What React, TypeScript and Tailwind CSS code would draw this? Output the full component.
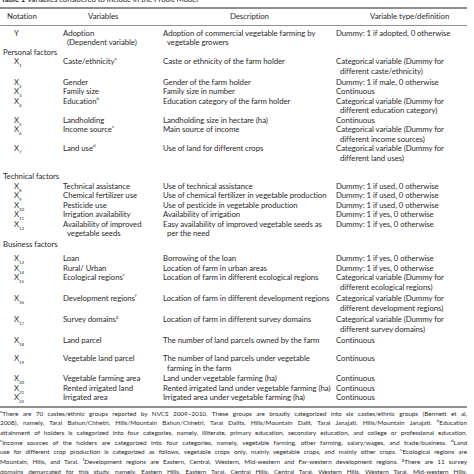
type Row = {
  n?: string;
  sub?: string;
  v?: string[];
  sup?: string;
  d?: string[];
  t?: string[];
  group?: string;
  mt: string;
};

const rows: Row[] = [
  { n: "Y", v: ["Adoption", "(Dependent variable)"], d: ["Adoption of commercial vegetable farming by", "vegetable growers"], t: ["Dummy: 1 if adopted, 0 otherwise"], mt: "mt-[3px]" },
  { group: "Personal factors", mt: "mt-[0px]" },
  { n: "X", sub: "1", v: ["Caste/ethnicity"], sup: "a", d: ["Caste or ethnicity of the farm holder"], t: ["Categorical variable (Dummy for", "different caste/ethnicity)"], mt: "mt-[0px]" },
  { n: "X", sub: "2", v: ["Gender"], d: ["Gender of the farm holder"], t: ["Dummy: 1 if male, 0 otherwise"], mt: "mt-[1.5px]" },
  { n: "X", sub: "3", v: ["Family size"], d: ["Family size in number"], t: ["Continuous"], mt: "mt-[0px]" },
  { n: "X", sub: "4", v: ["Education"], sup: "b", d: ["Education category of the farm holder"], t: ["Categorical variable (Dummy for", "different education category)"], mt: "mt-[0px]" },
  { n: "X", sub: "5", v: ["Landholding"], d: ["Landholding size in hectare (ha)"], t: ["Continuous"], mt: "mt-[0px]" },
  { n: "X", sub: "6", v: ["Income source"], sup: "c", d: ["Main source of income"], t: ["Categorical variable (Dummy for", "different income sources)"], mt: "mt-[0px]" },
  { n: "X", sub: "7", v: ["Land use"], sup: "d", d: ["Use of land for different crops"], t: ["Categorical variable (Dummy for", "different land uses)"], mt: "mt-[0px]" },
  { group: "Technical factors", mt: "mt-[9px]" },
  { n: "X", sub: "8", v: ["Technical assistance"], d: ["Use of technical assistance"], t: ["Dummy: 1 if used, 0 otherwise"], mt: "mt-[0px]" },
  { n: "X", sub: "9", v: ["Chemical fertilizer use"], d: ["Use of chemical fertilizer in vegetable production"], t: ["Dummy: 1 if used, 0 otherwise"], mt: "mt-[0px]" },
  { n: "X", sub: "10", v: ["Pesticide use"], d: ["Use of pesticide in vegetable production"], t: ["Dummy: 1 if used, 0 otherwise"], mt: "mt-[0px]" },
  { n: "X", sub: "11", v: ["Irrigation availability"], d: ["Availability of irrigation"], t: ["Dummy: 1 if yes, 0 otherwise"], mt: "mt-[0px]" },
  { n: "X", sub: "12", v: ["Availability of improved", "vegetable seeds"], d: ["Easy availability of improved vegetable seeds as", "per the need"], t: ["Dummy: 1 if yes, 0 otherwise"], mt: "mt-[0px]" },
  { group: "Business factors", mt: "mt-[1.5px]" },
  { n: "X", sub: "13", v: ["Loan"], d: ["Borrowing of the loan"], t: ["Dummy: 1 if yes, 0 otherwise"], mt: "mt-[4.5px]" },
  { n: "X", sub: "14", v: ["Rural/ Urban"], d: ["Location of farm in urban areas"], t: ["Dummy: 1 if yes, 0 otherwise"], mt: "mt-[0px]" },
  { n: "X", sub: "15", v: ["Ecological regions"], sup: "e", d: ["Location of farm in different ecological regions"], t: ["Categorical variable (Dummy for", "different ecological regions)"], mt: "mt-[0px]" },
  { n: "X", sub: "16", v: ["Development regions"], sup: "f", d: ["Location of farm in different development regions"], t: ["Categorical variable (Dummy for", "different development regions)"], mt: "mt-[2px]" },
  { n: "X", sub: "17", v: ["Survey domains"], sup: "g", d: ["Location of farm in different survey domains"], t: ["Categorical variable (Dummy for", "different survey domains)"], mt: "mt-[2px]" },
  { n: "X", sub: "18", v: ["Land parcel"], d: ["The number of land parcels owned by the farm"], t: ["Continuous"], mt: "mt-[2px]" },
  { n: "X", sub: "19", v: ["Vegetable land parcel"], d: ["The number of land parcels under vegetable", "farming in the farm"], t: ["Continuous"], mt: "mt-[8.5px]" },
  { n: "X", sub: "20", v: ["Vegetable farming area"], d: ["Land under vegetable farming (ha)"], t: ["Continuous"], mt: "mt-[1px]" },
  { n: "X", sub: "21", v: ["Rented irrigated land"], d: ["Rented irrigated land under vegetable farming (ha)"], t: ["Continuous"], mt: "mt-[0px]" },
  { n: "X", sub: "22", v: ["Irrigated area"], d: ["Irrigated area under vegetable farming (ha)"], t: ["Continuous"], mt: "mt-[0px]" },
];

function Sup({ c }: { c: string }) {
  return <span className="align-super text-[4.5px] leading-none">{c}</span>;
}

const notes = [
  <>
    <Sup c="a" />There are 70 castes/ethnic groups reported by NVCS 2009–2010. These groups are broadly categorized into six castes/ethnic groups (Bennett et al,
  </>,
  <>
    2008), namely, Tarai Bahun/Chhetri, Hills/Mountain Bahun/Chhetri, Tarai Dalits, Hills/Mountain Dalit, Tarai Janajati, Hills/Mountain Janajati. <Sup c="b" />Education
  </>,
  <>attainment of holders is categorized into four categories, namely, illiterate, primary education, secondary education, and college or professional education.</>,
  <>
    <Sup c="c" />Income sources of the holders are categorized into four categories, namely, vegetable farming, other farming, salary/wages, and trade/business. <Sup c="d" />Land
  </>,
  <>
    use for different crop production is categorized as follows, vegetable crops only, mainly vegetable crops, and mainly other crops. <Sup c="e" />Ecological regions are
  </>,
  <>
    Mountain, Hills, and Tarai. <Sup c="f" />Development regions are Eastern, Central, Western, Mid-western and Far-western development regions. <Sup c="g" />There are 11 survey
  </>,
  <>domains demarcated for this study, namely, Eastern Hills, Eastern Tarai, Central Hills, Central Tarai, Western Hills, Western Tarai, Mid-western Hills,</>,
  <>Mid-western Tarai, Far-western Hills, and Far-western Tarai. The study covered all the survey domains for the household data.</>,
];

function Lines({ lines, sup }: { lines?: string[]; sup?: string }) {
  if (!lines) return <div />;
  return (
    <div>
      {lines.map((l, i) => (
        <div key={i} className={`h-[9.5px] whitespace-nowrap ${i > 0 ? "pl-[4px]" : ""}`}>
          {l}
          {i === 0 && sup && <Sup c={sup} />}
        </div>
      ))}
    </div>
  );
}

export default function App() {
  return (
    <div className="w-[474px] h-[474px] overflow-hidden bg-white text-[#2b2b2b] text-[7.8px] tracking-[-0.06px] leading-[9.5px] font-['Lato',sans-serif]">
      <div className="w-[467px]">
        <div className="-mt-[5px] h-[9.5px] whitespace-nowrap pl-[1px]">
          <b>Table 1</b> Variables considered to include in the Probit Model
        </div>
        <div className="mt-[2.5px] h-[2px] bg-[#8f8f8f]" />
        <div className="mt-[3px] grid grid-cols-[63px_100px_173px_1fr]">
          <div className="pl-[7px]">Notation</div>
          <div className="pl-[25px]">Variables</div>
          <div className="pl-[67px]">Description</div>
          <div className="pl-[34px]">Variable type/definition</div>
        </div>
        <div className="mt-[3px] h-px bg-[#8f8f8f]" />
        {rows.map((r, i) =>
          r.group ? (
            <div key={i} className={`${r.mt} h-[9.5px] pl-[3px]`}>
              {r.group}
            </div>
          ) : (
            <div key={i} className={`${r.mt} grid grid-cols-[63px_100px_173px_1fr]`}>
              <div className="h-[9.5px] pl-[14px] whitespace-nowrap">
                {r.n}
                {r.sub && <span className="align-sub text-[4.5px] leading-none">{r.sub}</span>}
              </div>
              <Lines lines={r.v} sup={r.sup} />
              <Lines lines={r.d} />
              <Lines lines={r.t} />
            </div>
          )
        )}
        <div className="mt-[3px] h-[2px] bg-[#8f8f8f]" />
        <div className="mt-[1px] text-[6.4px] tracking-[-0.03px] leading-[9.7px]">
          {notes.map((n, i) => (
            <div key={i} className="h-[9.7px] whitespace-nowrap text-justify [text-align-last:justify]">
              {n}
            </div>
          ))}
        </div>
      </div>
    </div>
  );
}
